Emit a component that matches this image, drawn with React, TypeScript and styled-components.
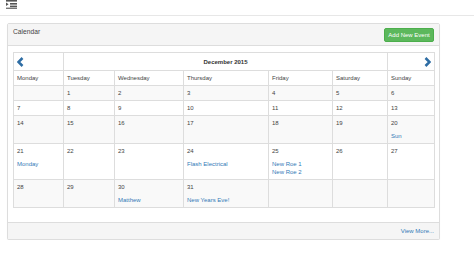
import React from "react";
import styled, { createGlobalStyle } from "styled-components";

const GlobalStyle = createGlobalStyle`
  html, body {
    margin: 0;
    padding: 0;
    background: #fff;
    font-family: "Liberation Sans", Arial, sans-serif;
    color: #444;
  }
`;

const TopBar = styled.div`
  height: 15px;
  border-bottom: 1px solid #e7e7e7;
  display: flex;
  align-items: flex-start;
  padding-left: 6px;
`;

const Panel = styled.div`
  margin: 7px 0 0 7px;
  width: 431px;
  border: 1px solid #ddd;
  border-radius: 2px;
  box-shadow: 0 1px 1px rgba(0, 0, 0, 0.05);
  background: #fff;
`;

const PanelHeading = styled.div`
  background: #f5f5f5;
  border-bottom: 1px solid #ddd;
  height: 21px;
  padding: 0 5px 0 5px;
  display: flex;
  justify-content: space-between;
  align-items: flex-start;
`;

const PanelTitle = styled.div`
  font-size: 6.7px;
  line-height: 8px;
  margin-top: 4px;
  color: #444;
`;

const GreenButton = styled.button`
  margin-top: 4px;
  height: 14px;
  width: 50px;
  padding: 0;
  border: 1px solid #4cae4c;
  border-radius: 2px;
  background: #5cb85c;
  color: #fff;
  font-family: inherit;
  font-size: 6px;
`;

const PanelBody = styled.div`
  padding: 6px 5px 14px 5px;
`;

const Table = styled.table`
  width: 421px;
  border-collapse: collapse;
  table-layout: fixed;
  font-size: 6px;
  line-height: 8px;
`;

const Cell = styled.td<{ $striped?: boolean }>`
  border: 1px solid #ddd;
  padding: 3px 3px 3px 3px;
  vertical-align: top;
  background: ${(p) => (p.$striped ? "#f9f9f9" : "#fff")};
  color: #444;
`;

const NavCell = styled.td<{ $align?: string }>`
  border: 1px solid #ddd;
  height: 17px;
  padding: 0 3px;
  text-align: ${(p) => p.$align || "left"};
  vertical-align: middle;
`;

const MonthTitle = styled.td`
  border: 1px solid #ddd;
  text-align: center;
  font-weight: bold;
  vertical-align: middle;
  color: #333;
`;

const DayHead = styled.td`
  border: 1px solid #ddd;
  padding: 3px 3px;
  height: 8px;
  text-align: left;
  vertical-align: middle;
`;

const Events = styled.div`
  margin-top: 5px;
`;

const EventLink = styled.a`
  display: block;
  color: #337ab7;
  text-decoration: none;
  line-height: 8px;
`;

const PanelFooter = styled.div`
  background: #f5f5f5;
  border-top: 1px solid #ddd;
  height: 16px;
  display: flex;
  align-items: center;
  justify-content: flex-end;
  padding-right: 5px;
  font-size: 6px;
`;

const Chevron = ({ right }: { right?: boolean }) => (
  <svg width="7" height="10" viewBox="0 0 7 10" style={{ display: "block", marginLeft: right ? "auto" : 0 }}>
    <path
      d={right ? "M1.5 1 L5.5 5 L1.5 9" : "M5.5 1 L1.5 5 L5.5 9"}
      fill="none"
      stroke="#2e6da4"
      strokeWidth="2.5"
    />
  </svg>
);

const MenuIcon = () => (
  <svg width="11" height="9" viewBox="0 0 11 9">
    <rect x="0" y="0" width="11" height="1.6" fill="#555" />
    <rect x="4" y="3" width="7" height="1.6" fill="#555" />
    <rect x="4" y="5.6" width="7" height="1.6" fill="#555" />
    <path d="M0 2.6 L2.6 4.3 L0 6 Z" fill="#555" />
    <rect x="0" y="7.6" width="11" height="1.4" fill="#777" />
  </svg>
);

const days = ["Monday", "Tuesday", "Wednesday", "Thursday", "Friday", "Saturday", "Sunday"];
const colWidths = [50, 51, 69, 85, 64, 55, 47];

type Day = { n?: number; events?: string[] };

const weeks: Day[][] = [
  [{}, { n: 1 }, { n: 2 }, { n: 3 }, { n: 4 }, { n: 5 }, { n: 6 }],
  [{ n: 7 }, { n: 8 }, { n: 9 }, { n: 10 }, { n: 11 }, { n: 12 }, { n: 13 }],
  [{ n: 14 }, { n: 15 }, { n: 16 }, { n: 17 }, { n: 18 }, { n: 19 }, { n: 20, events: ["Sun"] }],
  [
    { n: 21, events: ["Monday"] },
    { n: 22 },
    { n: 23 },
    { n: 24, events: ["Flash Electrical"] },
    { n: 25, events: ["New Roe 1", "New Roe 2"] },
    { n: 26 },
    { n: 27 },
  ],
  [
    { n: 28 },
    { n: 29 },
    { n: 30, events: ["Matthew"] },
    { n: 31, events: ["New Years Eve!"] },
    {},
    {},
    {},
  ],
];

export default function App() {
  return (
    <>
      <GlobalStyle />
      <TopBar>
        <MenuIcon />
      </TopBar>
      <Panel>
        <PanelHeading>
          <PanelTitle>Calendar</PanelTitle>
          <GreenButton>Add New Event</GreenButton>
        </PanelHeading>
        <PanelBody>
          <Table>
            <colgroup>
              {colWidths.map((w, i) => (
                <col key={i} style={{ width: w }} />
              ))}
            </colgroup>
            <thead>
              <tr>
                <NavCell>
                  <Chevron />
                </NavCell>
                <MonthTitle colSpan={5}>December 2015</MonthTitle>
                <NavCell $align="right">
                  <Chevron right />
                </NavCell>
              </tr>
              <tr>
                {days.map((d) => (
                  <DayHead key={d}>{d}</DayHead>
                ))}
              </tr>
            </thead>
            <tbody>
              {weeks.map((week, wi) => (
                <tr key={wi}>
                  {week.map((day, di) => (
                    <Cell key={di} $striped={wi % 2 === 0}>
                      {day.n ?? "\u00a0"}
                      {day.events && (
                        <Events>
                          {day.events.map((e) => (
                            <EventLink key={e} href="#">
                              {e}
                            </EventLink>
                          ))}
                        </Events>
                      )}
                    </Cell>
                  ))}
                </tr>
              ))}
            </tbody>
          </Table>
        </PanelBody>
        <PanelFooter>
          <EventLink href="#">View More...</EventLink>
        </PanelFooter>
      </Panel>
    </>
  );
}
